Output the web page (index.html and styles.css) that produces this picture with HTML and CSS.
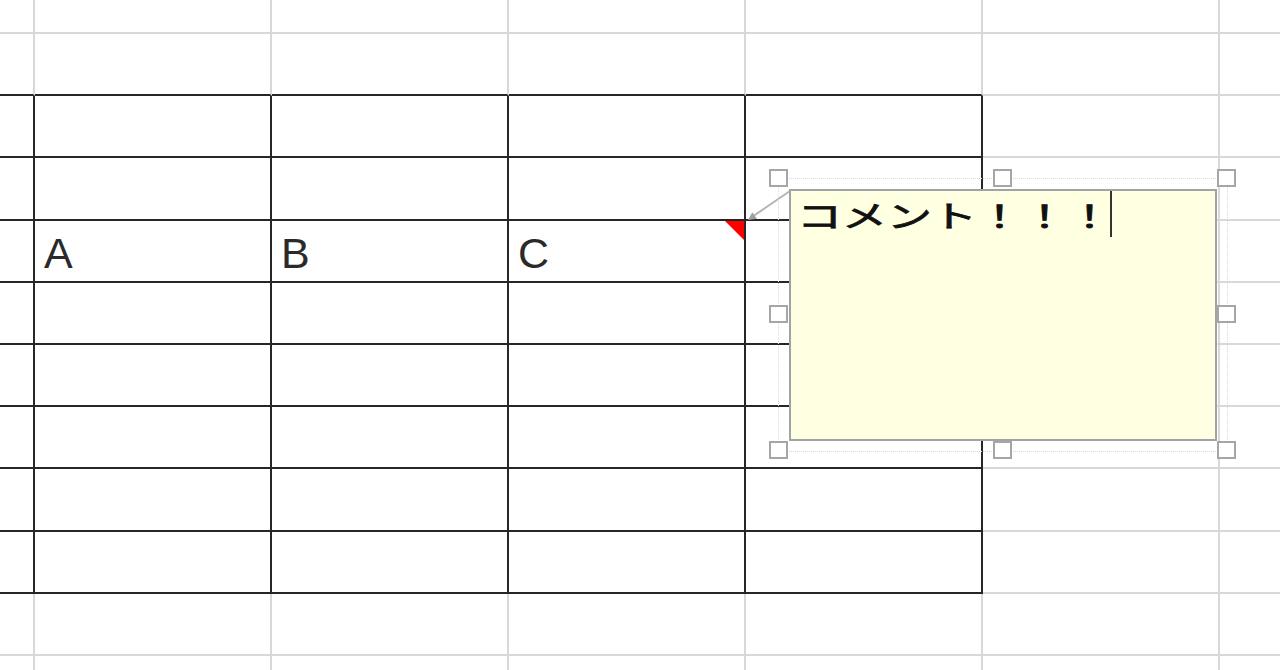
FILE: index.html
```html
<!DOCTYPE html>
<html lang="ja">
<head>
    <meta charset="UTF-8">
    <meta name="viewport" content="width=device-width, initial-scale=1.0">
    <title>Sheet1</title>
    <link rel="stylesheet" href="styles.css">
</head>
<body>
<div class="sheet">
  <div class="row"><div class="c"></div><div class="c"></div><div class="c"></div><div class="c"></div><div class="c"></div><div class="c"></div><div class="c"></div></div>
  <div class="row"><div class="c bb"></div><div class="c bb"></div><div class="c bb"></div><div class="c bb"></div><div class="c bb"></div><div class="c"></div><div class="c"></div></div>
  <div class="row"><div class="c bb br"></div><div class="c bb br"></div><div class="c bb br"></div><div class="c bb br"></div><div class="c bb br"></div><div class="c"></div><div class="c"></div></div>
  <div class="row"><div class="c bb br"></div><div class="c bb br"></div><div class="c bb br"></div><div class="c bb br"></div><div class="c bb br"></div><div class="c"></div><div class="c"></div></div>
  <div class="row"><div class="c bb br"></div><div class="c bb br">A</div><div class="c bb br">B</div><div class="c bb br noted">C</div><div class="c bb br"></div><div class="c"></div><div class="c"></div></div>
  <div class="row"><div class="c bb br"></div><div class="c bb br"></div><div class="c bb br"></div><div class="c bb br"></div><div class="c bb br"></div><div class="c"></div><div class="c"></div></div>
  <div class="row"><div class="c bb br"></div><div class="c bb br"></div><div class="c bb br"></div><div class="c bb br"></div><div class="c bb br"></div><div class="c"></div><div class="c"></div></div>
  <div class="row"><div class="c bb br"></div><div class="c bb br"></div><div class="c bb br"></div><div class="c bb br"></div><div class="c bb br"></div><div class="c"></div><div class="c"></div></div>
  <div class="row"><div class="c bb br"></div><div class="c bb br"></div><div class="c bb br"></div><div class="c bb br"></div><div class="c bb br"></div><div class="c"></div><div class="c"></div></div>
  <div class="row"><div class="c bb br"></div><div class="c bb br"></div><div class="c bb br"></div><div class="c bb br"></div><div class="c bb br"></div><div class="c"></div><div class="c"></div></div>
  <div class="row"><div class="c"></div><div class="c"></div><div class="c"></div><div class="c"></div><div class="c"></div><div class="c"></div><div class="c"></div></div>
  <div class="row"><div class="c"></div><div class="c"></div><div class="c"></div><div class="c"></div><div class="c"></div><div class="c"></div><div class="c"></div></div>
</div>

<!-- leader line from the note to its cell -->
<svg class="leader" width="56" height="40" viewBox="0 0 56 40">
  <line x1="50" y1="6" x2="12" y2="32" stroke="#b4b4b4" stroke-width="2"/>
  <polygon points="8,35 16.9,33.8 12.3,27.2" fill="#a0a0a0"/>
</svg>

<div class="note-frame">
  <div class="note"><span class="note-text">コメント！！！</span><span class="caret"></span></div>
  <span class="handle h-tl"></span>
  <span class="handle h-tc"></span>
  <span class="handle h-tr"></span>
  <span class="handle h-ml"></span>
  <span class="handle h-mr"></span>
  <span class="handle h-bl"></span>
  <span class="handle h-bc"></span>
  <span class="handle h-br"></span>
</div>
</body>
</html>
```

FILE: styles.css
```css
body{
  margin: 0;
  background: #fff;
  position: relative;
}

.sheet{
  width: 1280px;
  height: 670px;
  overflow: hidden;
  display: grid;
  grid-template-columns: 35px repeat(6, 237px);
  grid-template-rows: 34px repeat(11, 62.2px);
}
.row{
  display: contents;
}
.c{
  box-sizing: border-box;
  border-right: 2px solid #d8d8d8;
  border-bottom: 2px solid #d8d8d8;
  font-family: "Liberation Sans", Arial, sans-serif;
  font-size: 43px;
  line-height: 1;
  color: #2a2a2a;
  display: flex;
  align-items: flex-end;
  padding: 0 0 6px 9px;
}
/* ruled range */
.c.bb{
  border-bottom-color: #262626;
}
.c.br{
  border-right-color: #262626;
}

/* comment indicator */
.noted{
  position: relative;
}
.noted::after{
  content: "";
  position: absolute;
  top: 0;
  right: 0;
  width: 0;
  height: 0;
  border-top: 19px solid #f00;
  border-left: 19px solid transparent;
}

.leader{
  position: absolute;
  left: 740px;
  top: 185px;
}

.note-frame{
  position: absolute;
  left: 778px;
  top: 178px;
  width: 450px;
  height: 274px;
  box-sizing: border-box;
  padding: 10px;
  border: 1px dotted #dadada;
}
.note{
  box-sizing: border-box;
  width: 100%;
  height: 100%;
  background: #ffffe1;
  border: 2px solid #a3a3a3;
  padding: 0 0 0 6px;
  line-height: 46px;
  white-space: nowrap;
}
/* wide gothic look of the note font */
.note-text{
  display: inline-block;
  vertical-align: top;
  font-family: "Noto Sans CJK JP", sans-serif;
  font-size: 30px;
  color: #111;
  -webkit-text-stroke: 0.8px #111;
  transform: scaleX(1.5);
  transform-origin: 0 0;
}
.caret{
  display: inline-block;
  width: 2px;
  height: 46px;
  background: #333;
  vertical-align: top;
  margin-left: 103px;
}

.handle{
  position: absolute;
  width: 19px;
  height: 18px;
  box-sizing: border-box;
  border: 2px solid #a6a6a6;
  background: #fff;
  margin: -10px 0 0 -10px;
}
.h-tl{ left: 0; top: 0; }
.h-tc{ left: 50%; top: 0; }
.h-tr{ left: 100%; top: 0; }
.h-ml{ left: 0; top: 50%; }
.h-mr{ left: 100%; top: 50%; }
.h-bl{ left: 0; top: 100%; }
.h-bc{ left: 50%; top: 100%; }
.h-br{ left: 100%; top: 100%; }
```
